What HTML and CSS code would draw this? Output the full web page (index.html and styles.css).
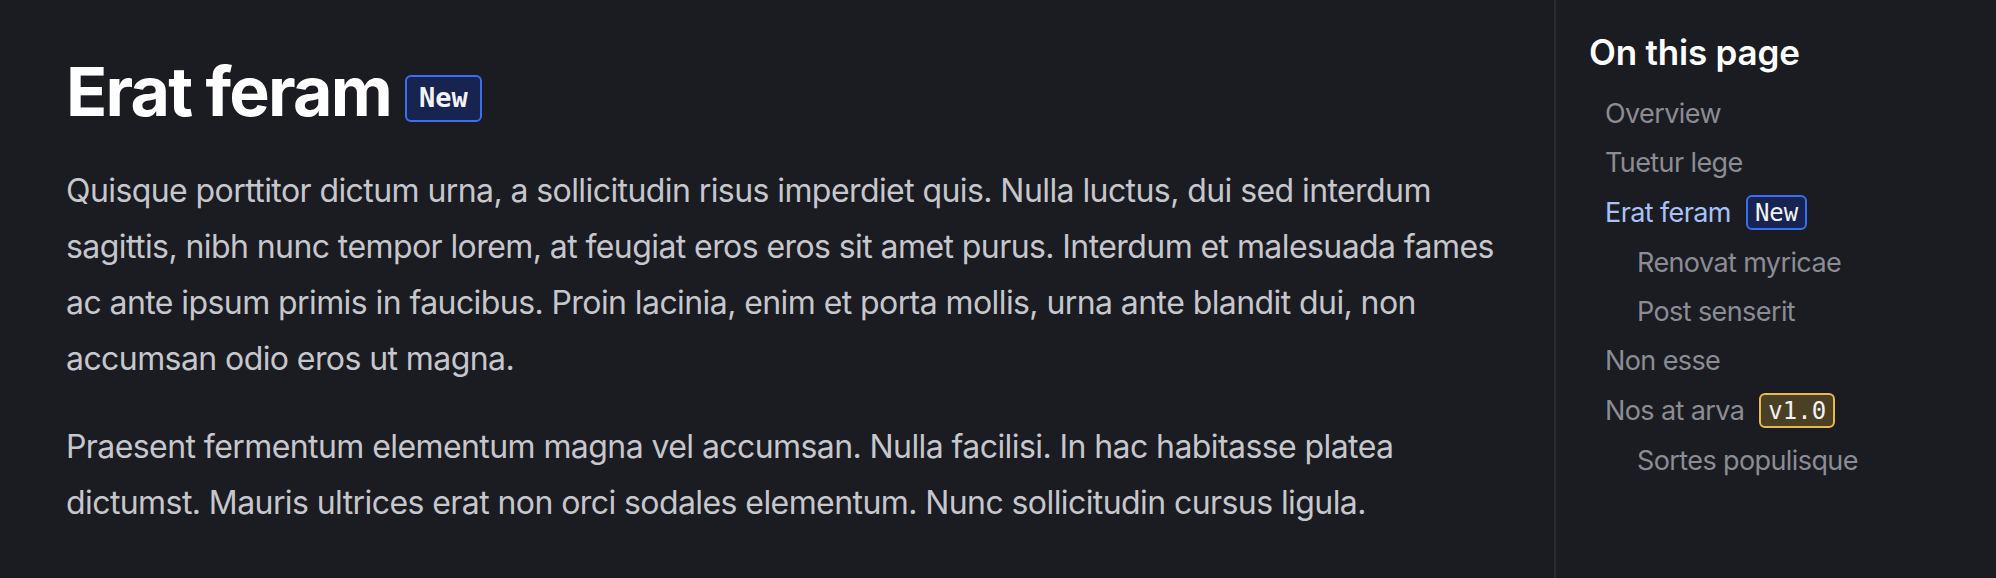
FILE: index.html
```html
<!DOCTYPE html>
<html lang="en">
<head>
<meta charset="utf-8">
<title>Erat feram</title>
<link rel="stylesheet" href="styles.css">
</head>
<body>
<div class="layout">
  <main class="content">
    <h1 class="title">Erat feram <span class="badge badge-new badge-lg">New</span></h1>
    <p>Quisque porttitor dictum urna, a sollicitudin risus imperdiet quis. Nulla luctus, dui sed interdum sagittis, nibh nunc tempor lorem, at feugiat eros eros sit amet purus. Interdum et malesuada fames ac ante ipsum primis in faucibus. Proin lacinia, enim et porta mollis, urna ante blandit dui, non accumsan odio eros ut magna.</p>
    <p>Praesent fermentum elementum magna vel accumsan. Nulla facilisi. In hac habitasse platea dictumst. Mauris ultrices erat non orci sodales elementum. Nunc sollicitudin cursus ligula.</p>
  </main>
  <aside class="toc">
    <h2 class="toc-title">On this page</h2>
    <ul class="toc-list">
      <li class="toc-item">Overview</li>
      <li class="toc-item">Tuetur lege</li>
      <li class="toc-item active with-badge">Erat feram <span class="badge badge-new">New</span></li>
      <li class="toc-item sub">Renovat myricae</li>
      <li class="toc-item sub">Post senserit</li>
      <li class="toc-item">Non esse</li>
      <li class="toc-item with-badge">Nos at arva <span class="badge badge-ver">v1.0</span></li>
      <li class="toc-item sub">Sortes populisque</li>
    </ul>
  </aside>
</div>
</body>
</html>
```

FILE: styles.css
```css
html, body {
  margin: 0;
  padding: 0;
  background: #1b1c21;
  height: 100%;
}

body {
  font-family: Inter, "Noto Sans", sans-serif;
  color: #c6c7cc;
}

.layout {
  display: flex;
  min-height: 578px;
}

.content {
  flex: 1;
  padding: 50px 44px 0 66px;
}

.title {
  margin: 0 0 31px 0;
  display: flex;
  align-items: center;
  gap: 14px;
  font-size: 68px;
  line-height: 82px;
  font-weight: 700;
  color: #ffffff;
  letter-spacing: -1.8px;
}

.content p {
  margin: 0 0 32px 0;
  font-size: 32px;
  line-height: 56px;
  letter-spacing: -0.58px;
}

.toc {
  width: 407px;
  flex: none;
  border-left: 2px solid #2b2c33;
  padding: 30px 0 0 33px;
}

.toc-title {
  margin: 0 0 15px 0;
  font-size: 35px;
  line-height: 44px;
  font-weight: 600;
  color: #ffffff;
  letter-spacing: -0.2px;
}

.toc-list {
  list-style: none;
  margin: 0;
  padding: 0;
}

.toc-item {
  display: flex;
  align-items: center;
  gap: 15px;
  height: 49.25px;
  padding-left: 16px;
  font-size: 27px;
  letter-spacing: -0.6px;
  color: #8b8c94;
}

.toc-item.with-badge {
  height: 50.25px;
}

.toc-item.sub {
  padding-left: 48px;
}

.toc-item.active {
  color: #a8c2f7;
}

.badge {
  display: inline-flex;
  align-items: center;
  box-sizing: border-box;
  height: 35px;
  padding: 0 7px;
  border: 2px solid;
  border-radius: 6px;
  font-family: "DejaVu Sans Mono", "Liberation Mono", monospace;
  font-size: 24px;
  font-weight: 400;
  color: #f2f2f4;
  letter-spacing: 0;
}

.badge-new {
  background: #172350;
  border-color: #3a6ff2;
}

.badge-ver {
  background: #4c4024;
  border-color: #e9b94c;
}

.badge-lg {
  height: 47px;
  padding: 0 12px;
  font-size: 27px;
  font-weight: 700;
  margin-top: 14px;
}
```
